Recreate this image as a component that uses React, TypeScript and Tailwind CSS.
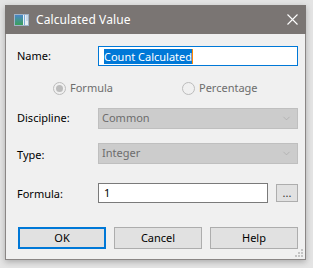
import { ChevronDown } from "lucide-react";

const font = { fontFamily: '"Noto Sans", "Open Sans", sans-serif' };

function TitleIcon() {
  return (
    <svg width="15" height="12" viewBox="0 0 15 12" className="shrink-0">
      <defs>
        <linearGradient id="g" x1="0" y1="0" x2="0" y2="1">
          <stop offset="0" stopColor="#4a86c8" />
          <stop offset="1" stopColor="#3aa05a" />
        </linearGradient>
      </defs>
      <rect x="0.5" y="0.5" width="14" height="11" fill="#e8eef4" stroke="#9fb3c8" />
      <rect x="1" y="1" width="8" height="10" fill="url(#g)" />
      <rect x="10" y="1" width="1" height="10" fill="#7aa9d6" />
      <rect x="12" y="1" width="2" height="6" fill="#c9d8e8" />
    </svg>
  );
}

function Radio({ label, checked }: { label: string; checked?: boolean }) {
  return (
    <div className="flex items-center gap-[2px] text-[#6d6d6d]">
      <span className="w-[13px] h-[13px] rounded-full border border-[#bcbcbc] bg-[#f0f0f0] grid place-items-center">
        {checked && <span className="w-[7px] h-[7px] rounded-full bg-[#bcbcbc]" />}
      </span>
      <span className="ml-[2px]">{label}</span>
    </div>
  );
}

function Combo({ value }: { value: string }) {
  return (
    <div className="w-[200px] h-[21px] bg-[#cccccc] border border-[#bfbfbf] flex items-center justify-between pl-[3px] pr-[5px] text-[#6d6d6d]">
      <span>{value}</span>
      <ChevronDown size={11} strokeWidth={1.2} className="text-[#a0a0a0]" />
    </div>
  );
}

function Btn({ label, focus }: { label: string; focus?: boolean }) {
  return (
    <div
      className={
        "w-[88px] h-[22px] flex items-center justify-center text-[#000] bg-[#e1e1e1] " +
        (focus ? "border-2 border-[#0078d7]" : "border border-[#adadad]")
      }
    >
      {label}
    </div>
  );
}

export default function App() {
  return (
    <div className="w-[313px] h-[268px] bg-[#e4e4e4] pt-[5px] pl-[5px]" style={font}>
      <div className="w-[301px] h-[255px] border border-[#8a8685] bg-[#f0f0f0] flex flex-col shadow-[0_2px_6px_rgba(0,0,0,0.25)] text-[11px] text-[#000]">
        <div className="h-[30px] -mx-px -mt-px bg-[#7a7573] flex items-center pl-[9px] pr-[7px] text-white">
          <TitleIcon />
          <span className="ml-[7px] text-[12px] tracking-[0.1px]">Calculated Value</span>
          <svg width="11" height="11" viewBox="0 0 11 11" className="ml-auto mr-[1px]">
            <path d="M0.5 0.5 L10.5 10.5 M10.5 0.5 L0.5 10.5" stroke="#fff" strokeWidth="1.1" />
          </svg>
        </div>

        <div className="flex flex-col pl-[11px] pr-[6px]">
          <div className="flex items-center mt-[12px] h-[20px]">
            <span className="w-[81px]">Name:</span>
            <div className="w-[200px] h-[20px] border border-[#0078d7] bg-white flex items-center pl-[5px]">
              <span className="bg-[#0078d7] text-white leading-[15px]">Count Calculated</span>
              <span className="w-px h-[15px] bg-[#ff8a00]" />
            </div>
          </div>

          <div className="flex items-center mt-[16px] h-[13px]">
            <div className="w-[36px]" />
            <div className="w-[129px]">
              <Radio label="Formula" checked />
            </div>
            <Radio label="Percentage" />
          </div>

          <div className="flex items-center mt-[13px]">
            <span className="w-[81px]">Discipline:</span>
            <Combo value="Common" />
          </div>

          <div className="flex items-center mt-[14px]">
            <span className="w-[81px] pt-[3px]">Type:</span>
            <Combo value="Integer" />
          </div>

          <div className="flex items-center mt-[19px]">
            <span className="w-[81px] pt-[2px]">Formula:</span>
            <div className="w-[170px] h-[20px] border border-[#7a7a7a] bg-white flex items-center pl-[5px]">
              1
            </div>
            <div className="ml-[8px] w-[22px] h-[18px] border border-[#adadad] bg-[#e1e1e1] flex items-center justify-center text-[#333] leading-none pb-[2px]">
              ...
            </div>
          </div>
        </div>

        <div className="flex gap-[8px] pl-[12px] mt-[24px]">
          <Btn label="OK" focus />
          <Btn label="Cancel" />
          <Btn label="Help" />
        </div>

        <div className="flex justify-end pr-[2px] mt-auto pb-[2px]">
          <svg width="8" height="8" viewBox="0 0 8 8">
            <rect x="6" y="0" width="2" height="2" fill="#c4c4c4" />
            <rect x="3" y="3" width="2" height="2" fill="#c4c4c4" />
            <rect x="6" y="3" width="2" height="2" fill="#c4c4c4" />
            <rect x="0" y="6" width="2" height="2" fill="#c4c4c4" />
            <rect x="3" y="6" width="2" height="2" fill="#c4c4c4" />
            <rect x="6" y="6" width="2" height="2" fill="#c4c4c4" />
          </svg>
        </div>
      </div>
    </div>
  );
}
